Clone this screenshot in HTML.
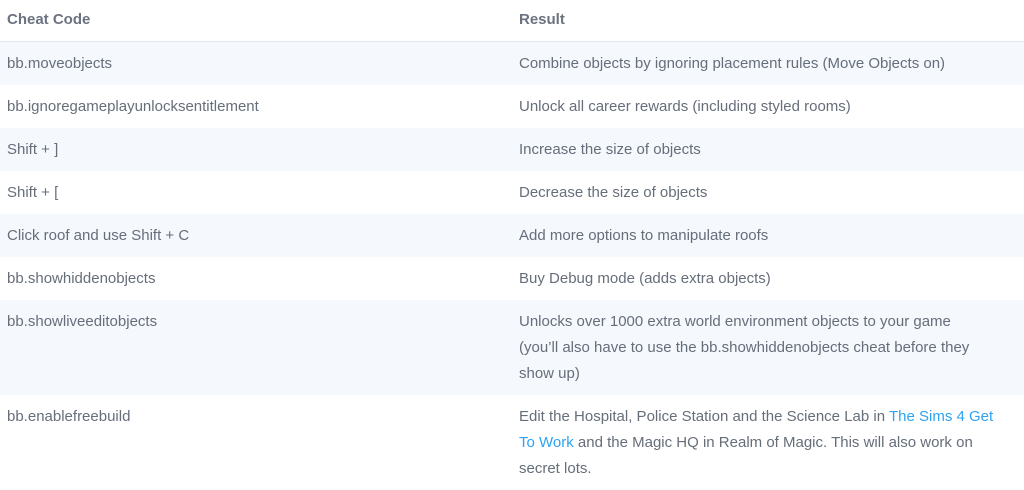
<!DOCTYPE html>
<html><head><meta charset="utf-8"><style>
body{margin:0;background:#fff;width:1024px;height:478px;overflow:hidden;font-family:"Liberation Sans",sans-serif;font-size:15px;color:#666e7a}
table{border-collapse:collapse;width:1024px;table-layout:fixed}
td,th{padding:9px 7px 8px;line-height:26px;vertical-align:top;text-align:left;white-space:nowrap}
th{font-weight:bold;color:#6b7280;padding:7px 7px 8px;border-bottom:1px solid #e5e8ec}
tr.s td{background:#f5f8fd}
col.a{width:512px}
a{color:#2ea3f2;text-decoration:none}
</style></head><body>
<table><colgroup><col class="a"><col></colgroup>
<tr><th>Cheat Code</th><th>Result</th></tr>
<tr class="s"><td>bb.moveobjects</td><td>Combine objects by ignoring placement rules (Move Objects on)</td></tr>
<tr><td>bb.ignoregameplayunlocksentitlement</td><td>Unlock all career rewards (including styled rooms)</td></tr>
<tr class="s"><td>Shift + ]</td><td>Increase the size of objects</td></tr>
<tr><td>Shift + [</td><td>Decrease the size of objects</td></tr>
<tr class="s"><td>Click roof and use Shift + C</td><td>Add more options to manipulate roofs</td></tr>
<tr><td>bb.showhiddenobjects</td><td>Buy Debug mode (adds extra objects)</td></tr>
<tr class="s"><td>bb.showliveeditobjects</td><td>Unlocks over 1000 extra world environment objects to your game<br>(you’ll also have to use the bb.showhiddenobjects cheat before they<br>show up)</td></tr>
<tr><td>bb.enablefreebuild</td><td>Edit the Hospital, Police Station and the Science Lab in <a>The Sims 4 Get</a><br><a>To Work</a> and the Magic HQ in Realm of Magic. This will also work on<br>secret lots.</td></tr>
</table>
</body></html>
